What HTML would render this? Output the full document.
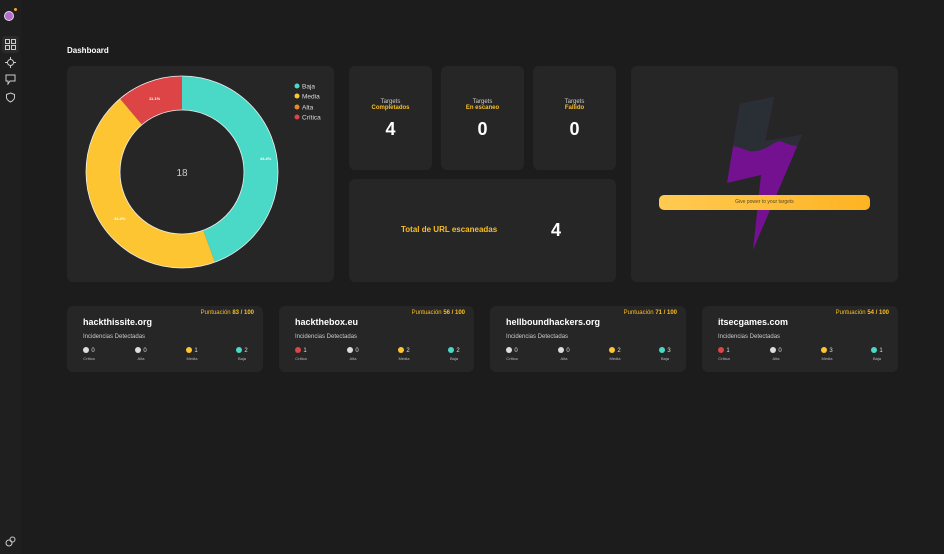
<!DOCTYPE html>
<html><head><meta charset="utf-8"><style>
*{margin:0;padding:0;box-sizing:border-box}
body{width:944px;height:554px;background:#1c1c1c;font-family:"Liberation Sans",sans-serif;color:#fff;position:relative;overflow:hidden}
.sb{position:absolute;left:0;top:0;width:21px;height:554px;background:#1f1f1f}
.c{position:absolute;background:#262626;border-radius:6px}
.abs{position:absolute}
.y{color:#fbbf24}
.st{text-align:center;font-size:6px;color:#ccc}
.st b{display:block;color:#fbbf24;font-size:6px}
.st .n{font-size:18px;font-weight:bold;color:#fff;margin-top:8px}
.bc .t{position:absolute;left:16px;top:11px;font-size:9px;font-weight:bold}
.bc .p{position:absolute;right:9px;top:4px;font-size:6px;color:#fbbf24}
.bc .i{position:absolute;left:16px;top:28px;font-size:6px;color:#ccc}
.bc .it{position:absolute;top:41px;font-size:6px;color:#ddd;text-align:center;width:30px}
.bc .it i{display:inline-block;width:6px;height:6px;border-radius:50%;vertical-align:-1px;margin-right:2px}
.bc .it s{display:block;text-decoration:none;font-size:4px;color:#bbb;margin-top:2px}
</style></head><body>
<div class="sb">
<div class="abs" style="left:4px;top:11px;width:10px;height:10px;border-radius:50%;background:#b76ad0;border:1px solid #ddd"></div>
<div class="abs" style="left:14px;top:8px;width:3px;height:3px;border-radius:50%;background:#f5a623"></div>
<div class="abs" style="left:2px;top:36px;width:17px;height:17px;background:#2a2a2a;border-radius:3px"></div>
<svg class="abs" style="left:5px;top:39px" width="11" height="11" viewBox="0 0 11 11" fill="none" stroke="#ccc" stroke-width="1"><rect x=".5" y=".5" width="4" height="4"/><rect x="6.5" y=".5" width="4" height="4"/><rect x=".5" y="6.5" width="4" height="4"/><rect x="6.5" y="6.5" width="4" height="4"/></svg>
<svg class="abs" style="left:5px;top:57px" width="11" height="11" viewBox="0 0 11 11" fill="none" stroke="#ccc"><circle cx="5.5" cy="5.5" r="3"/><path d="M5.5 0v3M5.5 8v3M0 5.5h3M8 5.5h3"/></svg>
<svg class="abs" style="left:5px;top:74px" width="11" height="11" viewBox="0 0 11 11" fill="none" stroke="#ccc"><path d="M1 1h9v6H5l-2 3V7H1z"/></svg>
<svg class="abs" style="left:5px;top:92px" width="11" height="11" viewBox="0 0 11 11" fill="none" stroke="#ccc"><path d="M5.5 1L9.5 2.5V5.5C9.5 8 5.5 10 5.5 10S1.5 8 1.5 5.5V2.5z"/></svg>
<svg class="abs" style="left:5px;top:536px" width="11" height="11" viewBox="0 0 11 11" fill="none" stroke="#ccc"><circle cx="4" cy="7" r="3"/><circle cx="7.5" cy="3.5" r="2.5"/></svg>
</div>
<div class="abs" style="left:67px;top:46px;font-size:8px;font-weight:bold">Dashboard</div>

<div class="c" style="left:67px;top:66px;width:267px;height:216px">
<svg class="abs" style="left:0;top:0" width="267" height="216">
<g transform="rotate(-90 115 106)" fill="none" stroke-width="34">
<circle cx="115" cy="106" r="79" stroke="#4ad8c7" stroke-dasharray="220.4 496.4"/>
<circle cx="115" cy="106" r="79" stroke="#fdc531" stroke-dasharray="0 220.4 220.4 496.4"/>
<circle cx="115" cy="106" r="79" stroke="#dc4446" stroke-dasharray="0 440.8 55.6 496.4"/>
</g>
<circle cx="115" cy="106" r="96" fill="none" stroke="#eee" stroke-width=".8"/>
<circle cx="115" cy="106" r="62" fill="#262626" stroke="#eee" stroke-width=".8"/>
<text x="115" y="110" fill="#ccc" font-size="10" text-anchor="middle" font-family="Liberation Sans">18</text>
<text x="193" y="94" fill="#fff" font-size="4" font-weight="bold">44.4%</text>
<text x="47" y="154" fill="#fff" font-size="4" font-weight="bold">44.4%</text>
<text x="82" y="34" fill="#fff" font-size="4" font-weight="bold">11.1%</text>
<g font-size="6.5" fill="#ddd" font-family="Liberation Sans">
<circle cx="230" cy="20" r="2.5" fill="#4ad8c7"/><text x="235" y="22.5">Baja</text>
<circle cx="230" cy="30" r="2.5" fill="#fdc531"/><text x="235" y="32.5">Media</text>
<circle cx="230" cy="41" r="2.5" fill="#e8862a"/><text x="235" y="43.5">Alta</text>
<circle cx="230" cy="51" r="2.5" fill="#dc4446"/><text x="235" y="53.5">Crítica</text>
</g></svg></div>

<div class="c st" style="left:349px;top:66px;width:83px;height:104px;padding-top:33px">Targets<b>Completados</b><div class="n">4</div></div>
<div class="c st" style="left:441px;top:66px;width:83px;height:104px;padding-top:33px">Targets<b>En escaneo</b><div class="n">0</div></div>
<div class="c st" style="left:533px;top:66px;width:83px;height:104px;padding-top:33px">Targets<b>Fallido</b><div class="n">0</div></div>
<div class="c" style="left:349px;top:179px;width:267px;height:103px">
<div class="abs y" style="left:52px;top:46px;font-size:8px;font-weight:bold">Total de URL escaneadas</div>
<div class="abs" style="left:202px;top:41px;font-size:18px;font-weight:bold">4</div></div>

<div class="c" style="left:631px;top:66px;width:267px;height:216px;overflow:hidden">
<svg class="abs" style="left:0;top:0" width="267" height="216">
<defs><clipPath id="lc"><polygon points="109,38 143,31 134,75 171,69 122,184 130,109 96,117"/></clipPath></defs>
<g clip-path="url(#lc)">
<rect x="0" y="0" width="267" height="216" fill="#731190"/>
<path d="M90 0H180V82C165 80 160 80 152 76C145 72 140 83 125 85C116 87 110 80 100 80H90z" fill="#2a2f36"/>
<path d="M144 83c4-2 10 0 12 5c-4 1-8-1-12-5z" fill="#731190"/>
</g></svg>
<div class="abs" style="left:28px;top:129px;width:211px;height:15px;border-radius:5px;background:linear-gradient(90deg,#ffca52,#feb322);font-size:5px;color:#5a4a2a;text-align:center;line-height:15px">Give power to your targets</div>
</div>

<div class="c bc" style="left:67px;top:306px;width:196px;height:66px"><div class="p">Puntuación <b>83 / 100</b></div><div class="t">hackthissite.org</div><div class="i">Incidencias Detectadas</div>
<div class="it" style="left:7px"><i style="background:#ddd"></i>0<s>Crítica</s></div><div class="it" style="left:59px"><i style="background:#ddd"></i>0<s>Alta</s></div><div class="it" style="left:110px"><i style="background:#fdc531"></i>1<s>Media</s></div><div class="it" style="left:160px"><i style="background:#4ad8c7"></i>2<s>Baja</s></div></div>
<div class="c bc" style="left:279px;top:306px;width:195px;height:66px"><div class="p">Puntuación <b>56 / 100</b></div><div class="t">hackthebox.eu</div><div class="i">Incidencias Detectadas</div>
<div class="it" style="left:7px"><i style="background:#dc4446"></i>1<s>Crítica</s></div><div class="it" style="left:59px"><i style="background:#ddd"></i>0<s>Alta</s></div><div class="it" style="left:110px"><i style="background:#fdc531"></i>2<s>Media</s></div><div class="it" style="left:160px"><i style="background:#4ad8c7"></i>2<s>Baja</s></div></div>
<div class="c bc" style="left:490px;top:306px;width:196px;height:66px"><div class="p">Puntuación <b>71 / 100</b></div><div class="t">hellboundhackers.org</div><div class="i">Incidencias Detectadas</div>
<div class="it" style="left:7px"><i style="background:#ddd"></i>0<s>Crítica</s></div><div class="it" style="left:59px"><i style="background:#ddd"></i>0<s>Alta</s></div><div class="it" style="left:110px"><i style="background:#fdc531"></i>2<s>Media</s></div><div class="it" style="left:160px"><i style="background:#4ad8c7"></i>3<s>Baja</s></div></div>
<div class="c bc" style="left:702px;top:306px;width:196px;height:66px"><div class="p">Puntuación <b>54 / 100</b></div><div class="t">itsecgames.com</div><div class="i">Incidencias Detectadas</div>
<div class="it" style="left:7px"><i style="background:#dc4446"></i>1<s>Crítica</s></div><div class="it" style="left:59px"><i style="background:#ddd"></i>0<s>Alta</s></div><div class="it" style="left:110px"><i style="background:#fdc531"></i>3<s>Media</s></div><div class="it" style="left:160px"><i style="background:#4ad8c7"></i>1<s>Baja</s></div></div>
</body></html>
